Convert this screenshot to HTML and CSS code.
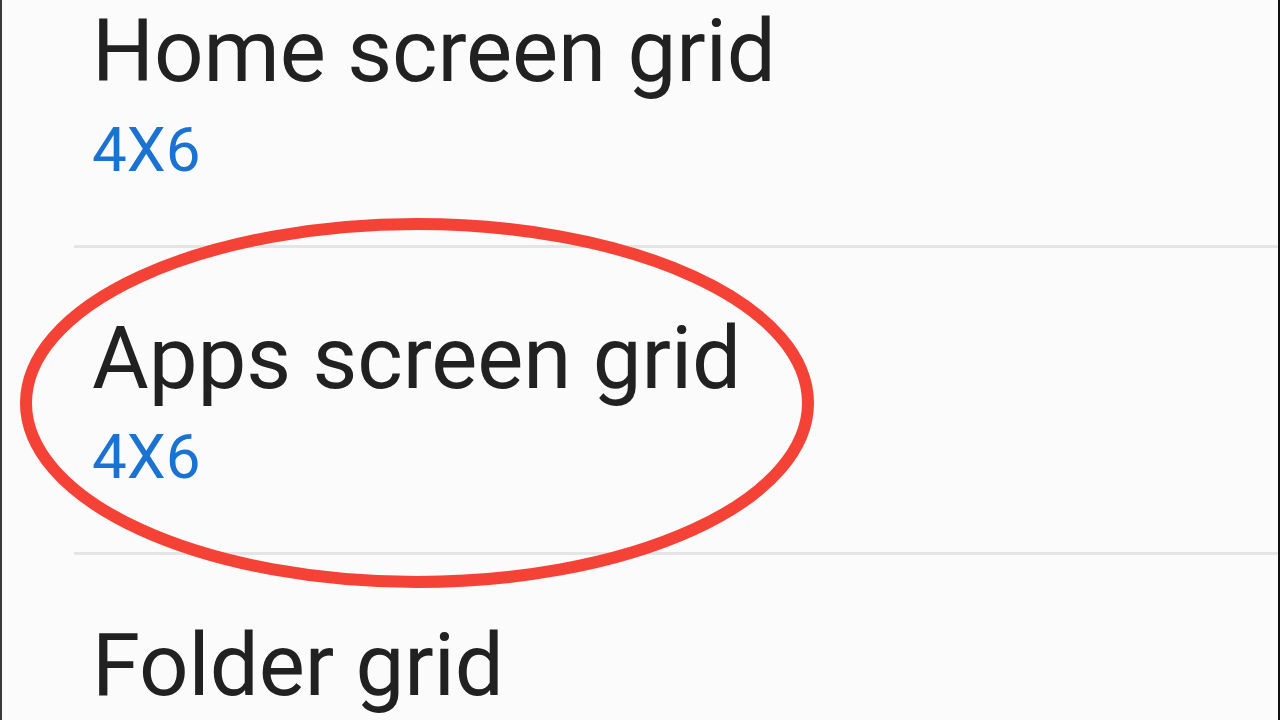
FILE: index.html
```html
<!DOCTYPE html>
<html lang="en">
<head>
<meta charset="utf-8">
<title>Grid settings</title>
<link rel="stylesheet" href="styles.css">
</head>
<body>
<main class="screen">
  <ul class="settings">
    <li class="item">
      <div class="title">Home screen grid</div>
      <div class="value">4X6</div>
    </li>
    <li class="item">
      <div class="title">Apps screen grid</div>
      <div class="value">4X6</div>
    </li>
    <li class="item">
      <div class="title">Folder grid</div>
    </li>
  </ul>
  <svg class="highlight" width="1280" height="720" viewBox="0 0 1280 720" aria-hidden="true">
    <ellipse cx="417" cy="403" rx="391" ry="179" fill="none" stroke="#f44336" stroke-width="12"/>
  </svg>
</main>
</body>
</html>
```
FILE: styles.css
```css
html, body {
  margin: 0;
  padding: 0;
  width: 1280px;
  height: 720px;
  overflow: hidden;
  background: #fbfbfb;
}

.screen {
  position: relative;
  box-sizing: border-box;
  width: 1280px;
  height: 720px;
  overflow: hidden;
  background: #fbfbfb;
  border-left: 2px solid #3a3a3a;
  border-right: 2px solid #111111;
  font-family: Roboto, "Noto Sans", "Liberation Sans", sans-serif;
}

.settings {
  list-style: none;
  margin: -59px 0 0 72px;
  padding: 0;
}

.item {
  padding: 60px 0 60px 18px;
  border-bottom: 3px solid #e5e5e5;
  display: flex;
  flex-direction: column;
  gap: 14px;
}

.title {
  font-size: 87px;
  line-height: 100px;
  letter-spacing: -0.1px;
  color: #212121;
  white-space: nowrap;
}

.value {
  font-size: 62px;
  line-height: 70px;
  color: #1a73d1;
  white-space: nowrap;
}

.highlight {
  position: absolute;
  left: -2px;
  top: 0;
  pointer-events: none;
}
```
